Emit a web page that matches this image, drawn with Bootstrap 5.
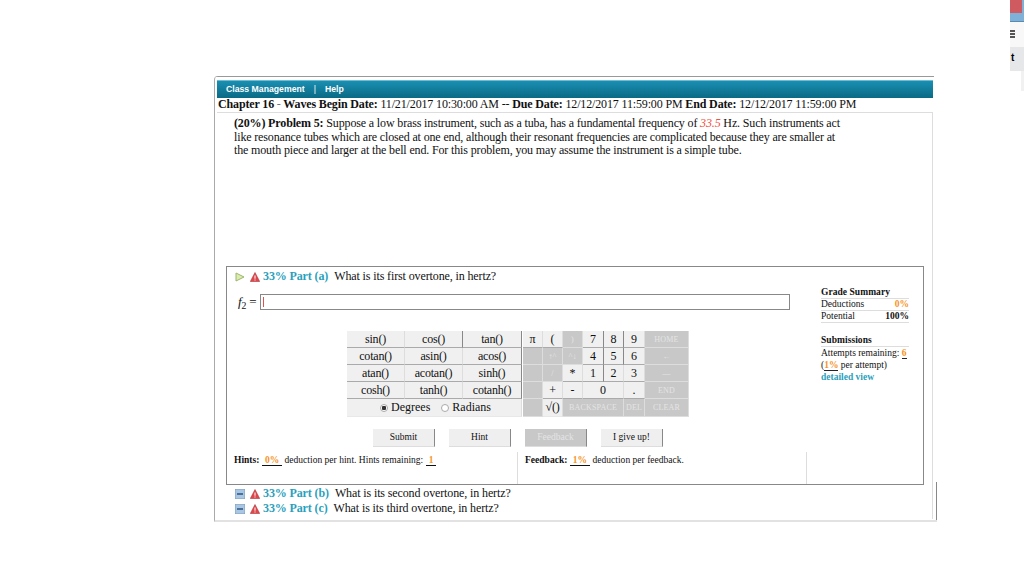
<!DOCTYPE html>
<html lang="en">
<head>
    <meta charset="UTF-8">
    <meta name="viewport" content="width=device-width, initial-scale=1.0">
    <title>Chapter 16 - Waves</title>
    <link rel="stylesheet" href="https://cdn.jsdelivr.net/npm/bootstrap@5.3.0/dist/css/bootstrap.min.css">
    <style>
        html, body { height: 576px; overflow: hidden; }
        body { font-family: "Liberation Serif", "Times New Roman", serif; color: #111; background: #fff; font-size: 12px; letter-spacing: -.145px; line-height: 13.5px; }
        .page-wrap { width: 1010px; padding: 76px 0 0 214px; }
        .side-strip { width: 14px; }
        .strip-blue { height: 22px; background: #7fb0d8; border-bottom: 1px solid #5a8ab0; }
        .strip-red { width: 12px; height: 13px; background: #cf5a60; }
        .strip-menu { height: 25px; background: #f8f8f8; padding-top: 8px; }
        .strip-menu i { display: block; width: 5px; height: 2px; margin-bottom: 1px; background: #555; }
        .strip-tab { height: 24px; background: #e6e7e9; font: bold 10px/22px "Liberation Sans", sans-serif; padding-left: 1px; color: #000; }
        .strip-rest { height: 20px; width: 3px; margin-left: 11px; background: #f1f1f1; }
        .assign-frame { width: 723px; height: 446px; border-left: 1px solid #aaa; border-bottom: 2px solid #e2e2e2; border-top-left-radius: 4px; padding: 4px 4px 0 2px;
            background: linear-gradient(#999, #999) no-repeat left top / 719px 1px, linear-gradient(#888, #888) no-repeat right bottom / 1px 38px; }
        .top-bar { height: 18px; background: linear-gradient(#1a8fb2, #0a6a84); border-top: 1px solid #6fbdd2; color: #fff; font: bold 8.7px/17px "Liberation Sans", sans-serif; letter-spacing: 0; padding-left: 9px; }
        .top-bar .sep { font-weight: normal; margin: 0 9px; }
        .chapter-line { height: 14px; line-height: 13px; padding-left: 1px; white-space: nowrap; }
        .body-wrap { height: 407px; border-top: 1px solid #ddd; border-right: 1px solid #ddd; }
        .problem-box { height: 153px; padding: 4px 0 0 17px; }
        .problem-box p { width: 612px; margin: 0; }
        .param { color: #f0503c; font-style: italic; }
        .part-box { width: 698px; height: 219px; margin-left: 9px; border: 1px solid #888; }
        .part-main { width: 580px; }
        .part-side { width: 117px; padding: 19px 14px 0 14px; font-size: 9.5px; line-height: 11px; letter-spacing: 0; }
        .part-side h6 { font: bold 9.5px/12px "Liberation Serif", serif; margin: 0; border-bottom: 1px solid #ddd; letter-spacing: .05px; }
        .part-side .stat-row { border-bottom: 1px solid #ddd; }
        .part-side .subm { margin-top: 11px; margin-bottom: 1px; }
        .part-side .subm-line { line-height: 11.8px; }
        .orange { color: #f7931e; font-weight: bold; }
        .teal { color: #2b9fbc; font-weight: bold; }
        .ul-num { border-bottom: 1px solid #111; padding: 0 3px; }
        .part-title { padding: 1px 0 0 8px; height: 18px; align-items: center; gap: 3px; letter-spacing: -.12px; }
        .part-title .teal { margin-right: 3px; }
        .warn-icon { margin-left: 2px; }
        .ans-row { height: 20px; margin: 7px 0 0 11px; align-items: center; gap: 3px; font-size: 13px; }
        .ans-input { width: 530px; height: 16px; border: 1px solid #888; padding: 2px 0 0 2px; }
        .ans-caret { display: block; width: 1px; height: 10px; background: #e05050; }
        .calc-wrap { margin: 19px 0 0 120px; gap: 1px; height: 87px; font-size: 12px; letter-spacing: -.2px; }
        .calc-fn, .calc-num { display: grid; grid-template-rows: 17px 17px 17px 17px 18px; height: 87px; }
        .calc-fn { width: 175px; grid-template-columns: 58px 58px 59px; }
        .calc-num { width: 166px; grid-template-columns: 20px 20px 20px 21px 20px 21px 44px; }
        .key { background: #f0f0f0; border-right: 1px solid #ddd; border-bottom: 1px solid #aaa; display: flex; align-items: center; justify-content: center; white-space: nowrap; padding-top: 1px; }
        .key.off { background: #c8c8c8; color: #e4e4e4; font-size: 8px; letter-spacing: .2px; border-color: #ddd; }
        .key.dark { border-right-color: #888; }
        .key.low { border-bottom-color: #e8e8e8; }
        .radio-cell { grid-column: 1 / 4; gap: 3px; letter-spacing: 0; padding-left: 3px; }
        .span-two { grid-column: span 2; }
        .span-three { grid-column: span 3; }
        .radio-dot { width: 8px; height: 8px; border: 1px solid #aaa; border-radius: 50%; background: #fff; display: inline-block; }
        .radio-dot.on { background: radial-gradient(circle, #333 0 2px, #fff 2.5px); }
        .btn-row { margin: 11px 0 0 146px; gap: 14px; }
        .act-btn { width: 62px; height: 18px; background: #efefef; border: 0; border-right: 1px solid #888; border-bottom: 1px solid #ddd; font: 9.5px/17px "Liberation Serif", serif; color: #111; padding: 0; border-radius: 0; }
        .act-btn.off { background: #c8c8c8; color: #e4e4e4; }
        .hint-row { margin-top: 5px; height: 32px; font-size: 9.5px; line-height: 13px; letter-spacing: .02px; }
        .hint-cell { width: 290px; padding: 2px 0 0 7px; }
        .hint-cell + .hint-cell { border-left: 1px solid #ddd; border-right: 1px solid #ddd; }
        .other-parts { padding: 1px 0 0 18px; line-height: 15px; letter-spacing: -.12px; }
        .other-parts .line { height: 15px; align-items: center; gap: 3px; }
        .other-parts .teal { margin-right: 3px; }
        .box-icon { margin-right: 2px; }
    </style>
</head>
<body class="d-flex">
    <main class="page-wrap flex-shrink-0">
        <div class="assign-frame">
            <div class="top-bar">Class Management<span class="sep">|</span>Help</div>
            <div class="chapter-line"><b>Chapter 16 <span class="text-secondary fw-normal">-</span> Waves Begin Date:</b> 11/21/2017 10:30:00 AM -- <b>Due Date:</b> 12/12/2017 11:59:00 PM <b>End Date:</b> 12/12/2017 11:59:00 PM</div>
            <div class="body-wrap">
                <div class="problem-box">
                    <p><b>(20%) Problem 5:</b> Suppose a low brass instrument, such as a tuba, has a fundamental frequency of <span class="param">33.5</span> Hz. Such instruments act like resonance tubes which are closed at one end, although their resonant frequencies are complicated because they are smaller at the mouth piece and larger at the bell end. For this problem, you may assume the instrument is a simple tube.</p>
                </div>
                <div class="part-box d-flex">
                    <div class="part-main">
                        <div class="part-title d-flex">
                            <svg width="10" height="10" viewBox="0 0 10 10"><path d="M1 1 L9 5 L1 9 Z" fill="#dcebb0" stroke="#9ab86a"/></svg>
                            <svg class="warn-icon" width="10" height="10" viewBox="0 0 10 10"><path d="M5 .5 L9.7 9.5 H.3 Z" fill="#e0474c" stroke="#a83a3e" stroke-width=".6"/><path d="M4.5 3.5h1v3.2h-1zM4.5 7.4h1v1h-1z" fill="#fff"/></svg>
                            <span class="teal">33% Part (a)</span> <span>What is its first overtone, in hertz?</span>
                        </div>
                        <div class="ans-row d-flex">
                            <span><i>f</i><sub>2</sub> =</span>
                            <div class="ans-input"><span class="ans-caret"></span></div>
                        </div>
                        <div class="calc-wrap d-flex">
                            <div class="calc-fn">
                                <div class="key">sin()</div><div class="key dark">cos()</div><div class="key dark">tan()</div>
                                <div class="key">cotan()</div><div class="key">asin()</div><div class="key dark">acos()</div>
                                <div class="key">atan()</div><div class="key">acotan()</div><div class="key dark">sinh()</div>
                                <div class="key">cosh()</div><div class="key">tanh()</div><div class="key dark">cotanh()</div>
                                <div class="key low radio-cell"><span class="radio-dot on"></span>Degrees <span class="radio-dot ms-2"></span>Radians</div>
                            </div>
                            <div class="calc-num">
                                <div class="key">π</div><div class="key">(</div><div class="key off">)</div><div class="key dark">7</div><div class="key dark">8</div><div class="key">9</div><div class="key off">HOME</div>
                                <div class="key off"></div><div class="key off">↑^</div><div class="key off">^↓</div><div class="key dark">4</div><div class="key dark">5</div><div class="key">6</div><div class="key off">←</div>
                                <div class="key off"></div><div class="key off">/</div><div class="key">*</div><div class="key dark">1</div><div class="key">2</div><div class="key">3</div><div class="key off">—</div>
                                <div class="key off"></div><div class="key">+</div><div class="key">-</div><div class="key span-two">0</div><div class="key">.</div><div class="key off">END</div>
                                <div class="key off"></div><div class="key low">√()</div><div class="key off span-three">BACKSPACE</div><div class="key off">DEL</div><div class="key off">CLEAR</div>
                            </div>
                        </div>
                        <div class="btn-row d-flex">
                            <button type="button" class="act-btn">Submit</button>
                            <button type="button" class="act-btn">Hint</button>
                            <button type="button" class="act-btn off">Feedback</button>
                            <button type="button" class="act-btn">I give up!</button>
                        </div>
                        <div class="hint-row d-flex">
                            <div class="hint-cell"><b>Hints:</b> <span class="orange ul-num">0%</span> deduction per hint. Hints remaining: <span class="orange ul-num">1</span></div>
                            <div class="hint-cell"><b>Feedback:</b> <span class="orange ul-num">1%</span> deduction per feedback.</div>
                        </div>
                    </div>
                    <aside class="part-side">
                        <h6>Grade Summary</h6>
                        <div class="stat-row d-flex justify-content-between"><span>Deductions</span><span class="orange">0%</span></div>
                        <div class="stat-row d-flex justify-content-between"><span>Potential</span><b>100%</b></div>
                        <h6 class="subm">Submissions</h6>
                        <div class="subm-line">Attempts remaining: <span class="orange border-bottom border-dark">6</span></div>
                        <div class="subm-line">(<span class="orange border-bottom border-dark">1%</span> per attempt)</div>
                        <div class="subm-line teal">detailed view</div>
                    </aside>
                </div>
                <div class="other-parts">
                    <div class="line d-flex">
                        <svg class="box-icon" width="10" height="10" viewBox="0 0 10 10"><rect width="10" height="10" fill="#a9c6e2" stroke="#7f9fc0"/><rect x="2" y="4" width="6" height="2" fill="#4a6f98"/></svg>
                        <svg width="10" height="10" viewBox="0 0 10 10"><path d="M5 .5 L9.7 9.5 H.3 Z" fill="#e0474c" stroke="#a83a3e" stroke-width=".6"/><path d="M4.5 3.5h1v3.2h-1zM4.5 7.4h1v1h-1z" fill="#fff"/></svg>
                        <span class="teal">33% Part (b)</span> <span>What is its second overtone, in hertz?</span>
                    </div>
                    <div class="line d-flex">
                        <svg class="box-icon" width="10" height="10" viewBox="0 0 10 10"><rect width="10" height="10" fill="#a9c6e2" stroke="#7f9fc0"/><rect x="2" y="4" width="6" height="2" fill="#4a6f98"/></svg>
                        <svg width="10" height="10" viewBox="0 0 10 10"><path d="M5 .5 L9.7 9.5 H.3 Z" fill="#e0474c" stroke="#a83a3e" stroke-width=".6"/><path d="M4.5 3.5h1v3.2h-1zM4.5 7.4h1v1h-1z" fill="#fff"/></svg>
                        <span class="teal">33% Part (c)</span> <span>What is its third overtone, in hertz?</span>
                    </div>
                </div>
            </div>
        </div>
    </main>
    <div class="side-strip">
        <div class="strip-blue"><div class="strip-red"></div></div>
        <div class="strip-menu"><i></i><i></i><i></i></div>
        <div class="strip-tab">t</div>
        <div class="strip-rest"></div>
    </div>
    <script src="https://cdn.jsdelivr.net/npm/bootstrap@5.3.0/dist/js/bootstrap.bundle.min.js"></script>
</body>
</html>
